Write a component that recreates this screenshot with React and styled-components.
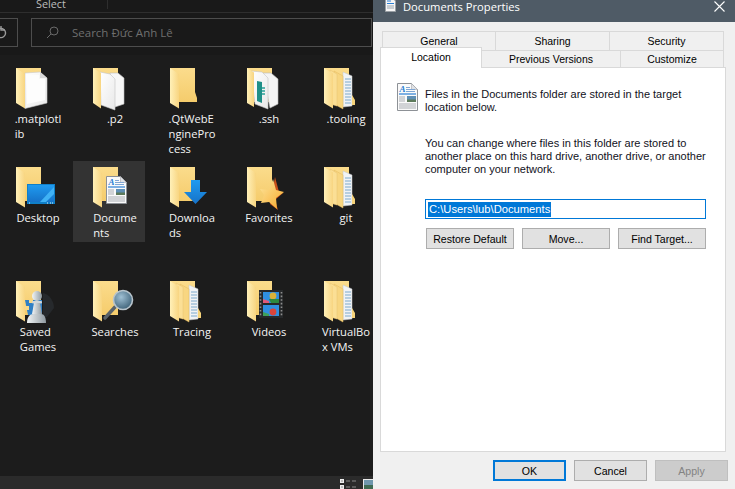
import React from "react";
import styled, { createGlobalStyle } from "styled-components";

const Global = createGlobalStyle`
  html, body { margin: 0; padding: 0; background: #1c1c1c; }
  * { box-sizing: border-box; }
`;

const Page = styled.div`
  display: flex;
  width: 735px;
  height: 489px;
  overflow: hidden;
`;

/* ---------- Explorer side ---------- */
const Explorer = styled.div`
  width: 373px;
  flex: none;
  height: 100%;
  display: flex;
  flex-direction: column;
  background: #1c1c1c;
  overflow: hidden;
  font-family: "Open Sans", "Noto Sans", sans-serif;
`;
const Ribbon = styled.div`
  height: 13px;
  flex: none;
  display: flex;
  background: #191919;
  border-bottom: 1px solid #2e2e2e;
  overflow: hidden;
`;
const RibbonLabel = styled.div`
  width: 108px;
  height: 9px;
  padding-left: 36px;
  border-right: 1px solid #2e2e2e;
  color: #bdbdbd;
  font-size: 10.8px;
  line-height: 8px;
`;
const AddressRow = styled.div`
  height: 42px;
  flex: none;
  display: flex;
  gap: 13px;
  padding: 5px 1px 8px 0;
  background: #191919;
`;
const RefreshBox = styled.div`
  width: 18px;
  flex: none;
  border: 1px solid #4d4d4d;
  border-left: 0;
  display: flex;
  align-items: center;
  overflow: hidden;
`;
const SearchBox = styled.div`
  flex: 1;
  display: flex;
  align-items: center;
  gap: 13px;
  padding-left: 14px;
  border: 1px solid #4d4d4d;
  color: #6f6f6f;
  font-size: 11.5px;
`;
const FileGrid = styled.div`
  flex: 1;
  min-height: 0;
  display: grid;
  grid-template-columns: repeat(5, 72px);
  grid-template-rows: 99px 114px auto;
  column-gap: 5px;
  margin-left: -4px;
  padding-top: 7px;
`;
const Cell = styled.div`
  align-self: start;
  display: flex;
  flex-direction: column;
  height: ${(p) => (p.$selected ? "81px" : "auto")};
  padding-top: 6px;
  background: ${(p) => (p.$selected ? "#333333" : "transparent")};
`;
const IconSlot = styled.div`
  height: 43px;
  padding-left: 20px;
  flex: none;
`;
const LabelWrap = styled.div`
  display: flex;
  justify-content: center;
  width: 84px;
`;
const Label = styled.div`
  color: #f4f4f4;
  font-size: 11.2px;
  line-height: 15px;
  white-space: pre;
  text-align: left;
`;
const StatusBar = styled.div`
  height: 13px;
  flex: none;
  display: flex;
  justify-content: flex-end;
  align-items: flex-start;
  gap: 7px;
  padding-top: 3px;
  background: #2b2b2b;
  overflow: hidden;
`;

/* ---------- Properties dialog ---------- */
const Dialog = styled.div`
  flex: 1;
  height: 100%;
  display: flex;
  flex-direction: column;
  background: #f0f0f0;
  color: #000;
  font-family: "Liberation Sans", Arial, sans-serif;
  font-size: 11px;
`;
const TitleBar = styled.div`
  height: 22px;
  flex: none;
  display: flex;
  align-items: center;
  gap: 7px;
  padding: 0 10px 9px 12px;
  background: #4f5b66;
  color: #fff;
  font-family: "Open Sans", "Noto Sans", sans-serif;
  font-size: 11.2px;
`;
const TitleText = styled.div`
  flex: 1;
`;
const Tabs = styled.div`
  flex: none;
  padding: 9px 9px 0 7px;
`;
const TabRow = styled.div`
  display: flex;
  height: ${(p) => p.$h}px;
  padding-left: ${(p) => p.$inset}px;
`;
const Tab = styled.div`
  width: ${(p) => p.$w}px;
  display: flex;
  align-items: center;
  justify-content: center;
  position: relative;
  border: 1px solid #d9d9d9;
  border-left-width: ${(p) => (p.$first ? 1 : 0)}px;
  border-bottom-width: ${(p) => (p.$flat ? 0 : 1)}px;
  background: #f0f0f0;
  font-size: 10.5px;
`;
const ActiveTab = styled.div`
  width: 102px;
  height: 21px;
  margin: -3px 0 0 0;
  padding-bottom: 3px;
  position: relative;
  z-index: 2;
  display: flex;
  align-items: center;
  justify-content: center;
  background: #fff;
  border: 1px solid #d9d9d9;
  border-bottom: 0;
  font-size: 10.5px;
`;
const Panel = styled.div`
  flex: 1;
  min-height: 0;
  margin: -1px 9px 0 7px;
  padding: 15px 19px 0 16px;
  background: #fff;
  border: 1px solid #d9d9d9;
`;
const Intro = styled.div`
  display: flex;
  gap: 7px;
  align-items: flex-start;
`;
const Para = styled.p`
  margin: ${(p) => p.$top || 0}px 0 0 ${(p) => p.$left || 0}px;
  font-size: 11px;
  line-height: 13px;
  white-space: pre;
  color: #111122;
`;
const PathField = styled.div`
  margin: 23px 0 0 28px;
  height: 20px;
  display: flex;
  align-items: center;
  padding-left: 2px;
  border: 1px solid #0078d7;
  background: #fff;
`;
const Selected = styled.span`
  background: #0078d7;
  color: #fff;
  font-size: 11.2px;
  line-height: 15px;
  padding: 0 1px;
`;
const ActionRow = styled.div`
  display: flex;
  gap: 8px;
  margin: 9px 0 0 29px;
`;
const Btn = styled.div`
  width: ${(p) => p.$w}px;
  height: 21px;
  display: flex;
  align-items: center;
  justify-content: center;
  background: ${(p) => (p.$disabled ? "#cccccc" : "#e1e1e1")};
  border: ${(p) => (p.$primary ? "2px solid #0078d7" : p.$disabled ? "1px solid #bfbfbf" : "1px solid #adadad")};
  color: ${(p) => (p.$disabled ? "#838383" : "#000")};
  font-size: 10.6px;
`;
const Footer = styled.div`
  height: 37px;
  flex: none;
  display: flex;
  justify-content: flex-end;
  gap: 8px;
  padding: 8px 7px 0 0;
`;

/* ---------- Icons ---------- */
const Defs = () => (
  <svg width="0" height="0" style={{ position: "absolute" }}>
    <defs>
      <linearGradient id="fBack" x1="0" y1="0" x2="0" y2="1">
        <stop offset="0" stopColor="#fbdc8c" />
        <stop offset="1" stopColor="#f5cc6c" />
      </linearGradient>
      <linearGradient id="fFlap" x1="0" y1="0" x2="1" y2="0">
        <stop offset="0" stopColor="#fff0b8" />
        <stop offset="1" stopColor="#f8d581" />
      </linearGradient>
      <linearGradient id="pageG" x1="0" y1="0" x2="1" y2="1">
        <stop offset="0" stopColor="#ffffff" />
        <stop offset="1" stopColor="#e9e9e9" />
      </linearGradient>
      <linearGradient id="blueG" x1="0" y1="0" x2="0" y2="1">
        <stop offset="0" stopColor="#1f9bf0" />
        <stop offset="1" stopColor="#1672c8" />
      </linearGradient>
      <radialGradient id="lens" cx="0.4" cy="0.35" r="0.75">
        <stop offset="0" stopColor="#9fc0d4" />
        <stop offset="1" stopColor="#34586f" />
      </radialGradient>
      <linearGradient id="pawnG" x1="0" y1="0" x2="1" y2="0">
        <stop offset="0" stopColor="#f2f5f6" />
        <stop offset="1" stopColor="#8f9aa1" />
      </linearGradient>
      <linearGradient id="starG" x1="0" y1="0" x2="1" y2="1">
        <stop offset="0" stopColor="#fde7a0" />
        <stop offset="1" stopColor="#f7a92a" />
      </linearGradient>
    </defs>
  </svg>
);

const Frame = ({ children, w = 48, h = 44 }) => (
  <svg width={w} height={h} viewBox={`0 0 ${w} ${h}`}>
    {children}
  </svg>
);
const Back = () => <path d="M0 0H25V34H0Z" fill="url(#fBack)" />;
const Flap = () => <path d="M0 0L9 6V40.5L0 35Z" fill="url(#fFlap)" />;

const DocGlyph = ({ x = 0, y = 0 }) => (
  <g transform={`translate(${x} ${y})`}>
    <path d="M0.5 0.5H14.5L20.5 6.5V27.5H0.5Z" fill="#fafafa" stroke="#8d9196" />
    <path d="M14.5 0.5V6.5H20.5Z" fill="#e0e2e5" stroke="#a6a8ac" strokeWidth=".6" />
    <text x="2.5" y="9" fontFamily="Liberation Serif, serif" fontStyle="italic" fontWeight="700" fontSize="9" fill="#2a7fd4">A</text>
    <path d="M9 4.5H13M9 6.5H18M9 8.5H18" stroke="#7fa6d4" strokeWidth="1" />
    <path d="M2 11H19" stroke="#2a7fd4" strokeWidth="1.2" />
    <rect x="10" y="13" width="9" height="6" fill="#5f8fb5" />
    <rect x="10" y="16.5" width="9" height="2.5" fill="#5d7a5b" />
    <path d="M2 14H8M2 16H8M2 18H8M2 21H19M2 23H19M2 25H19" stroke="#a9adb3" strokeWidth="1" />
  </g>
);

const icons = {
  page: () => (
    <Frame>
      <Back />
      <path d="M9 5L24 4L31 10V35L9 40.5Z" fill="url(#pageG)" stroke="#c9c9c9" strokeWidth=".6" />
      <path d="M24 4V10H31Z" fill="#d9d9d9" />
      <path d="M11 7H23V11H29V32L11 36Z" fill="#fdfdfd" />
      <Flap />
    </Frame>
  ),
  pages: () => (
    <Frame>
      <Back />
      <path d="M17 5L25 5L31 10V36L22 39Z" fill="#f7f7f7" stroke="#bdbdbd" strokeWidth=".6" />
      <path d="M7 4L17 6L22 11V42L8 37Z" fill="url(#pageG)" stroke="#c4c4c4" strokeWidth=".6" />
      <path d="M0 0L8 5V40.5L0 35Z" fill="url(#fFlap)" />
    </Frame>
  ),
  plain: () => (
    <Frame>
      <path d="M0 0H25V24L27 30V34H0Z" fill="url(#fBack)" />
      <Flap />
    </Frame>
  ),
  sheet: () => (
    <Frame>
      <Back />
      <path d="M16 5L24 5L31 11V36L23 40Z" fill="#f4f4f4" stroke="#bbb" strokeWidth=".6" />
      <path d="M4 3L15 4L21 10V41L8 36Z" fill="url(#pageG)" stroke="#c4c4c4" strokeWidth=".6" />
      <path d="M10 13L15 14V35L10 33Z" fill="#1f8f88" />
      <path d="M15 20H18M15 23H18M15 26H18" stroke="#2aa198" strokeWidth="1.6" />
      <path d="M0 0L7 4.5V39L0 35Z" fill="url(#fFlap)" />
    </Frame>
  ),
  stack: () => (
    <Frame>
      <Back />
      <path d="M19 4L28 8V38L19 39Z" fill="#f1f3f5" stroke="#c2c6ca" strokeWidth=".5" />
      <path d="M21 11H27M21 14H27M21 17H27M21 20H27M21 23H27M21 26H27M21 29H27M21 32H27M21 35H27" stroke="#7da9cc" strokeWidth="1" />
      <path d="M28 27L31 32V37H28Z" fill="#f6d37a" />
      <path d="M10 3L19 8V41L10 36Z" fill="#f8d681" stroke="#e2b85e" strokeWidth=".5" />
      <path d="M6 2L13 6V38L6 36Z" fill="#fbdf95" stroke="#e6c070" strokeWidth=".5" />
      <path d="M0 0L9 5.5V40.5L0 35Z" fill="url(#fFlap)" />
    </Frame>
  ),
  desktop: () => (
    <Frame>
      <Back /><Flap />
      <rect x="11" y="17" width="28" height="20" fill="#0f7fc8" />
      <rect x="12" y="18" width="26" height="17" fill="url(#blueG)" />
      <path d="M24 35L38 20V27L30 35Z" fill="#3fb2f5" />
      <path d="M13 36H14M31 36H32M34 36H35M36 36H37" stroke="#d6efff" strokeWidth="1" />
    </Frame>
  ),
  documents: () => (
    <Frame><Back /><Flap /><DocGlyph x={13} y={9} /></Frame>
  ),
  downloads: () => (
    <Frame>
      <Back /><Flap />
      <path d="M21 13H30V25H37L25.5 37L14 25H21Z" fill="url(#blueG)" />
    </Frame>
  ),
  star: () => (
    <Frame>
      <Back /><Flap />
      <path d="M28 10L32 25L36 26L28 33L31 43L23 37Z" fill="#c8501a" />
      <path d="M26 12L29 23L37 25L29 31L30 42L22 35L14 36L17 28L13 22L22 23Z" fill="url(#starG)" />
    </Frame>
  ),
  chess: () => (
    <Frame>
      <Back /><Flap />
      <path d="M27 12C33 13 38 20 38 27L31 36H27Z" fill="#26292c" />
      <path d="M9 19H26V34H12Z" fill="#2f7fc4" />
      <path d="M13 19H17V22H13ZM9 25H13V29H9Z" fill="#f7d889" />
      <circle cx="21" cy="15" r="5" fill="url(#pawnG)" />
      <rect x="16" y="20" width="10" height="2.4" rx="1" fill="#cfd6da" />
      <path d="M18 22H24L26 33H16Z" fill="url(#pawnG)" />
      <path d="M11 42C11 36 14 33 17 33H25C28 33 30 36 30 42Z" fill="url(#pawnG)" />
    </Frame>
  ),
  search: () => (
    <Frame>
      <Back /><Flap />
      <path d="M12 37L22 26" stroke="#59626a" strokeWidth="3.4" strokeLinecap="round" />
      <circle cx="30" cy="19" r="9.5" fill="url(#lens)" stroke="#b8c4cc" strokeWidth="1.6" />
    </Frame>
  ),
  video: () => (
    <Frame>
      <Back /><Flap />
      <rect x="12" y="9" width="24" height="28" fill="#26282a" />
      <path d="M13.5 11V36M34.5 11V36" stroke="#8e8e8e" strokeWidth="1.6" strokeDasharray="1.6 2" />
      <rect x="16" y="11" width="16" height="11" fill="#2f8fe0" />
      <rect x="16" y="24" width="16" height="11" fill="#2f8fe0" />
      <path d="M16 18L22 20V22H16Z" fill="#e05a7a" />
      <path d="M16 31L22 33V35H16Z" fill="#3fa05a" />
      <circle cx="26" cy="15" r="3.4" fill="#d9b23a" />
      <path d="M22 18H32V22H24Z" fill="#2c8a3f" />
      <circle cx="26" cy="31" r="3.4" fill="#d9443a" />
    </Frame>
  ),
};

const files = [
  [".matplotl\nib", "page"],
  [".p2", "pages"],
  [".QtWebE\nnginePro\ncess", "plain"],
  [".ssh", "sheet"],
  [".tooling", "stack"],
  ["Desktop", "desktop"],
  ["Docume\nnts", "documents", true],
  ["Downloa\nds", "downloads"],
  ["Favorites", "star"],
  ["git", "stack"],
  ["Saved\nGames", "chess"],
  ["Searches", "search"],
  ["Tracing", "stack"],
  ["Videos", "video"],
  ["VirtualBo\nx VMs", "stack"],
];

const SearchIcon = () => (
  <svg width="13" height="13" viewBox="0 0 13 13" fill="none" stroke="#6a6a6a" strokeWidth="1">
    <circle cx="8" cy="5" r="4" />
    <path d="M5 8L1 12" />
  </svg>
);
const RefreshIcon = () => (
  <svg width="9" height="14" viewBox="0 0 9 14" fill="none" stroke="#9a9a9a" strokeWidth="1.4">
    <path d="M-1 2.5A4.6 4.6 0 1 1 -1 11.5A4.6 4.6 0 0 1 -3 10" transform="translate(1 0)" />
    <path d="M1 0V4H5" />
  </svg>
);
const CloseIcon = () => (
  <svg width="11" height="11" viewBox="0 0 11 11" stroke="#fff" strokeWidth="1.1" fill="none">
    <path d="M0.5 0.5L10.5 10.5M10.5 0.5L0.5 10.5" />
  </svg>
);
const TitleIcon = () => (
  <svg width="11" height="14" viewBox="0 0 11 14" style={{ marginTop: -4 }}>
    <path d="M0.5 0H7.5L10.5 3V13.5H0.5Z" fill="#f6f6f6" stroke="#9aa0a5" />
    <path d="M2 3H6M2 5.5H9" stroke="#2a7fd4" />
    <path d="M2 8H9M2 10H9" stroke="#9aa6b0" />
  </svg>
);
const ViewIcons = () => (
  <svg width="16" height="12" viewBox="0 0 16 12">
    <rect x="0" y="0" width="4" height="4" fill="#eee" />
    <rect x="1.5" y="1.5" width="1" height="1" fill="#333" />
    <rect x="0" y="6" width="4" height="4" fill="#eee" />
    <rect x="1.5" y="7.5" width="1" height="1" fill="#333" />
    <path d="M6 2H10M12 2H16M6 8H10M12 8H16" stroke="#8a8a8a" />
  </svg>
);
const ThumbIcon = () => (
  <svg width="10" height="12" viewBox="0 0 10 12">
    <rect x="0" y="0" width="10" height="12" fill="#e8e8e8" />
    <rect x="1" y="1" width="9" height="8" fill="#6f97ad" />
    <rect x="1" y="6" width="9" height="4" fill="#3f6a52" />
  </svg>
);

export default function App() {
  return (
    <Page>
      <Global />
      <Defs />
      <Explorer>
        <Ribbon>
          <RibbonLabel>Select</RibbonLabel>
        </Ribbon>
        <AddressRow>
          <RefreshBox><RefreshIcon /></RefreshBox>
          <SearchBox>
            <SearchIcon />
            Search Đức Anh Lê
          </SearchBox>
        </AddressRow>
        <FileGrid>
          {files.map(([name, icon, selected]) => {
            const Icon = icons[icon];
            return (
              <Cell key={name} $selected={selected}>
                <IconSlot><Icon /></IconSlot>
                <LabelWrap><Label>{name}</Label></LabelWrap>
              </Cell>
            );
          })}
        </FileGrid>
        <StatusBar>
          <ViewIcons />
          <ThumbIcon />
        </StatusBar>
      </Explorer>
      <Dialog>
        <TitleBar>
          <TitleIcon />
          <TitleText>Documents Properties</TitleText>
          <CloseIcon />
        </TitleBar>
        <Tabs>
          <TabRow $h={19} $inset={2}>
            <Tab $w={114} $first $flat>General</Tab>
            <Tab $w={114} $flat>Sharing</Tab>
            <Tab $w={114} $flat>Security</Tab>
          </TabRow>
          <TabRow $h={18} $inset={0}>
            <ActiveTab>Location</ActiveTab>
            <Tab $w={139}>Previous Versions</Tab>
            <Tab $w={103}>Customize</Tab>
          </TabRow>
        </Tabs>
        <Panel>
          <Intro>
            <svg width="21" height="28" viewBox="0 0 21 28"><DocGlyph /></svg>
            <Para $top={5}>{"Files in the Documents folder are stored in the target\nlocation below."}</Para>
          </Intro>
          <Para $top={23} $left={28}>{"You can change where files in this folder are stored to\nanother place on this hard drive, another drive, or another\ncomputer on your network."}</Para>
          <PathField><Selected>C:\Users\lub\Documents</Selected></PathField>
          <ActionRow>
            <Btn $w={88}>Restore Default</Btn>
            <Btn $w={88}>Move...</Btn>
            <Btn $w={88}>Find Target...</Btn>
          </ActionRow>
        </Panel>
        <Footer>
          <Btn $w={73} $primary>OK</Btn>
          <Btn $w={73}>Cancel</Btn>
          <Btn $w={73} $disabled>Apply</Btn>
        </Footer>
      </Dialog>
    </Page>
  );
}
